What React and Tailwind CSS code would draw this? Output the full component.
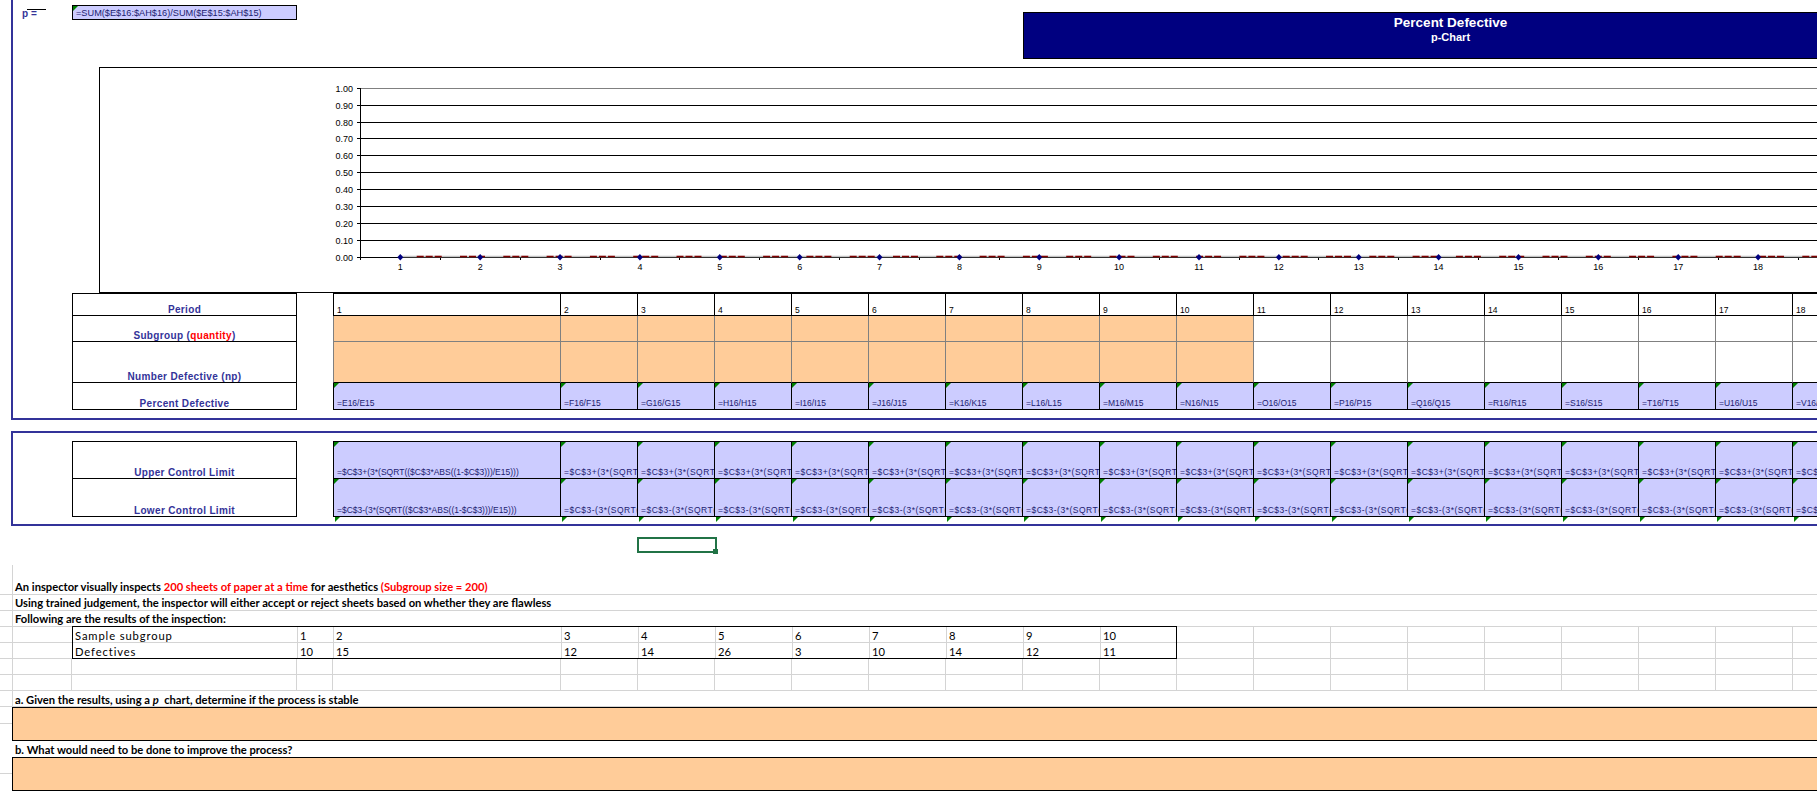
import React from 'react';

const COLS = Array.from({ length: 18 }, (_, i) => i);
const LETTERS = 'EFGHIJKLMNOPQRSTUV'.split('');
const GRID_Y = [20.5, 37.5, 54.5, 70.5, 87.5, 104.5, 121.5, 138.5, 155.5, 172.5, 189.5];
const Y_LABELS = ['1.00', '0.90', '0.80', '0.70', '0.60', '0.50', '0.40', '0.30', '0.20', '0.10', '0.00'];
const SAMPLES = [
  [1, 10],
  [2, 15],
  [3, 12],
  [4, 14],
  [5, 26],
  [6, 3],
  [7, 10],
  [8, 14],
  [9, 12],
  [10, 11],
];

const Flag = ({ className = 'top-0 left-0' }) => (
  <span className={`absolute w-[5px] h-[5px] bg-[#008000] [clip-path:polygon(0_0,100%_0,0_100%)] ${className}`} />
);

const Label = ({ children, className = '' }) => (
  <div className={`flex items-end justify-center border-x border-b border-black bg-white text-[10px] leading-[10px] font-bold tracking-[0.35px] text-[#333399] ${className}`}>
    {children}
  </div>
);

const FormulaCell = ({ text, first, top, wide, bottomFlag }) => (
  <div className={`relative flex items-end min-w-0 border-r border-b border-black bg-[#ccccff] pl-[3px] text-[8.5px] leading-[11px] text-[#1c1c70] whitespace-nowrap ${first ? 'border-l' : ''} ${top ? 'border-t' : ''} ${wide && !first ? 'tracking-[0.5px]' : ''}`}>
    <Flag />
    <span className="block w-full overflow-hidden">{text}</span>
    {bottomFlag && <Flag className="top-full left-[1px] mt-px" />}
  </div>
);

const Chart = () => {
  const centers = COLS.map((i) => 300.3 + i * 79.87);
  return (
    <svg className="block w-full h-full" viewBox="0 0 1717 224" preserveAspectRatio="xMinYMin slice">
      {GRID_Y.map((y, i) => (
        <g key={y} shapeRendering="crispEdges">
          <line x1="260" x2="1717" y1={y} y2={y} stroke={i === 0 ? '#808080' : '#000'} />
          <line x1="257" x2="260" y1={y} y2={y} stroke="#000" />
          <text x="253" y={y + 3.5} textAnchor="end" fontSize="9" fontFamily="Liberation Sans" fill="#000">
            {Y_LABELS[i]}
          </text>
        </g>
      ))}
      <line x1="260.5" x2="260.5" y1="20" y2="190" stroke="#000" shapeRendering="crispEdges" />
      {Array.from({ length: 19 }, (_, i) => (
        <line key={i} x1={260.5 + i * 79.87} x2={260.5 + i * 79.87} y1="189" y2="192" stroke="#000" shapeRendering="crispEdges" />
      ))}
      <line x1="300" x2="1717" y1="188.6" y2="188.6" stroke="#c4c4c4" strokeWidth="1.5" />
      <line x1="316.7" x2="1717" y1="188.6" y2="188.6" stroke="#800000" strokeWidth="1.5" strokeDasharray="7 2 7 2 7 18.3" />
      {centers.map((x, i) => (
        <g key={x}>
          <polygon points={`${x},186 ${x + 3},189.3 ${x},192.6 ${x - 3},189.3`} fill="#000080" />
          <text x={x} y="202" textAnchor="middle" fontSize="9" fontFamily="Liberation Sans" fill="#000">
            {i + 1}
          </text>
        </g>
      ))}
    </svg>
  );
};

const TopPanel = () => (
  <div className="h-[420px] border-l-2 border-b-2 border-[#333399]">
    <div className="flex items-start h-[67px] pt-[5px]">
      <div className="relative w-[59px] shrink-0 pl-[9px] pt-[3px] text-[10px] leading-[12px] font-bold text-[#333399]">
        <span className="absolute left-[14px] top-[4px] w-[19px] h-px bg-black" />
        p<span className="ml-[3px]">=</span>
      </div>
      <div className="relative w-[225px] h-[15px] shrink-0 border border-black bg-[#ccccff] pl-[3px] text-[9.2px] leading-[14px] text-[#1c1c70]">
        <Flag />
        =SUM($E$16:$AH$16)/SUM($E$15:$AH$15)
      </div>
      <div className="ml-[726px] mt-[7px] w-[855px] h-[47px] shrink-0 border border-black bg-[#000080] text-center font-bold text-white">
        <div className="text-[13.5px] leading-[14px] mt-[3px]">Percent Defective</div>
        <div className="text-[11px] leading-[13px] mt-[1px]">p-Chart</div>
      </div>
    </div>

    <div className="ml-[86px] h-[226px] border-t border-l border-b border-black">
      <Chart />
    </div>

    <div className="ml-[59px] grid grid-cols-[225px_36px_228px_repeat(17,77px)] grid-rows-[23px_26px_41px_27px]">
      <Label className="border-t">Period</Label>
      <div />
      {COLS.map((i) => (
        <div key={i} className={`flex items-end border-t border-r border-b border-black pl-[3px] text-[8.5px] leading-[10px] text-black ${i === 0 ? 'border-l' : ''}`}>
          {i + 1}
        </div>
      ))}

      <Label>
        <span>
          Subgroup (<span className="text-[#ff0000]">quantity</span>)
        </span>
      </Label>
      <div />
      {COLS.map((i) => (
        <div key={i} className={`border-r border-b border-[#808080] ${i === 0 ? 'border-l' : ''} ${i < 10 ? 'bg-[#ffcc99]' : ''}`} />
      ))}

      <Label>Number Defective (np)</Label>
      <div />
      {COLS.map((i) => (
        <div key={i} className={`border-r border-b border-r-[#808080] border-b-black ${i === 0 ? 'border-l border-l-[#808080]' : ''} ${i < 10 ? 'bg-[#ffcc99]' : ''}`} />
      ))}

      <Label>Percent Defective</Label>
      <div />
      {COLS.map((i) => (
        <FormulaCell key={i} first={i === 0} text={`=${LETTERS[i]}16/${LETTERS[i]}15`} />
      ))}
    </div>
  </div>
);

const LimitPanel = () => (
  <div className="mt-[11px] h-[95px] border-t-2 border-l-2 border-b-2 border-[#333399] pt-[8px]">
    <div className="ml-[59px] grid grid-cols-[225px_36px_228px_repeat(17,77px)] grid-rows-[38px_38px]">
      <Label className="border-t">Upper Control Limit</Label>
      <div />
      {COLS.map((i) => (
        <FormulaCell key={i} first={i === 0} top wide text={`=$C$3+(3*(SQRT(($C$3*ABS((1-$C$3)))/${LETTERS[i]}15)))`} />
      ))}
      <Label>Lower Control Limit</Label>
      <div />
      {COLS.map((i) => (
        <FormulaCell key={i} first={i === 0} wide bottomFlag text={`=$C$3-(3*(SQRT(($C$3*ABS((1-$C$3)))/${LETTERS[i]}15)))`} />
      ))}
    </div>
  </div>
);

const EmptyCols = ({ count }) =>
  Array.from({ length: count }, (_, i) => <div key={i} className="w-[77px] shrink-0 border-r border-[#d4d4d4]" />);

const SheetLine = ({ children, className = 'h-[16px]' }) => (
  <div className={`flex items-end ml-[12px] border-l border-[#d4d4d4] pl-[2px] whitespace-nowrap ${className}`}>
    <span className="block leading-[15px]">{children}</span>
  </div>
);

const AnswerBox = () => (
  <div className="flex h-[34px]">
    <div className="w-[12px] shrink-0">
      <div className="h-[17px] border-b border-[#d4d4d4]" />
    </div>
    <div className="flex-1 border-y border-l border-black bg-[#ffcc99]" />
  </div>
);

const Sheet = () => (
  <div className="mt-[12px] font-['Lato',sans-serif] text-[11.2px] font-bold text-black">
    <div className="h-[30px] border-b border-[#d4d4d4]">
      <SheetLine className="h-[29px]">
        <span>
          An inspector visually inspects <span className="text-[#ff0000]">200 sheets of paper at a time</span> for aesthetics{' '}
          <span className="text-[#ff0000]">(Subgroup size = 200)</span>
        </span>
      </SheetLine>
    </div>
    <div className="h-[16px] border-b border-[#d4d4d4]">
      <SheetLine className="h-[15px]">Using trained judgement, the inspector will either accept or reject sheets based on whether they are flawless</SheetLine>
    </div>
    <div className="h-[16px] border-b border-[#d4d4d4]">
      <SheetLine className="h-[15px]">Following are the results of the inspection:</SheetLine>
    </div>

    <div className="flex h-[32px] font-normal">
      <div className="w-[72px] shrink-0 flex flex-col">
        <div className="h-[16px] border-b border-[#d4d4d4]">
          <div className="ml-[12px] h-full border-l border-[#d4d4d4]" />
        </div>
        <div className="h-[16px] border-b border-[#d4d4d4]">
          <div className="ml-[12px] h-full border-l border-[#d4d4d4]" />
        </div>
      </div>
      <div className="w-[1105px] shrink-0 -mt-px h-[33px] border border-black">
        <div className="flex h-[16px] border-b border-[#d4d4d4]">
          <div className="w-[225px] shrink-0 border-r border-[#d4d4d4] pl-[2px] pt-px leading-[15px] tracking-[0.9px]">Sample subgroup</div>
          {SAMPLES.map(([n], i) => (
            <div key={n} className={`${i === 0 ? 'w-[36px]' : i === 1 ? 'w-[228px]' : 'w-[77px]'} shrink-0 border-r border-[#d4d4d4] pl-[2px] pt-px leading-[15px] last:border-r-0`}>
              {n}
            </div>
          ))}
        </div>
        <div className="flex h-[15px]">
          <div className="w-[225px] shrink-0 border-r border-[#d4d4d4] pl-[2px] pt-px leading-[15px] tracking-[0.9px]">Defectives</div>
          {SAMPLES.map(([n, d], i) => (
            <div key={n} className={`${i === 0 ? 'w-[36px]' : i === 1 ? 'w-[228px]' : 'w-[77px]'} shrink-0 border-r border-[#d4d4d4] pl-[2px] pt-px leading-[15px] last:border-r-0`}>
              {d}
            </div>
          ))}
        </div>
      </div>
      <div className="flex-1 flex flex-col min-w-0">
        <div className="flex h-[16px] border-b border-[#d4d4d4]">
          <EmptyCols count={9} />
        </div>
        <div className="flex h-[16px] border-b border-[#d4d4d4]">
          <EmptyCols count={9} />
        </div>
      </div>
    </div>

    {[0, 1].map((r) => (
      <div key={r} className="flex h-[16px] border-b border-[#d4d4d4]">
        <div className="ml-[12px] w-[60px] shrink-0 border-l border-r border-[#d4d4d4]" />
        <div className="w-[225px] shrink-0 border-r border-[#d4d4d4]" />
        <div className="w-[36px] shrink-0 border-r border-[#d4d4d4]" />
        <div className="w-[228px] shrink-0 border-r border-[#d4d4d4]" />
        <EmptyCols count={16} />
      </div>
    ))}

    <div className="h-[16px] border-b border-[#d4d4d4]">
      <SheetLine className="h-[15px] pt-px">
        <span className="relative top-px">
          a. Given the results, using a <i>p</i>&nbsp; chart, determine if the process is stable
        </span>
      </SheetLine>
    </div>
    <AnswerBox />
    <div className="h-[16px]">
      <SheetLine className="h-[15px] border-l-0 ml-[13px]">
        <span className="relative top-px">b. What would need to be done to improve the process?</span>
      </SheetLine>
    </div>
    <AnswerBox />
  </div>
);

export default function App() {
  return (
    <div className="w-[1817px] h-[805px] overflow-hidden bg-white font-['Liberation_Sans',Arial,sans-serif]">
      <div className="ml-[11px] w-[1806px]">
        <TopPanel />
        <LimitPanel />
      </div>
      <div className="relative ml-[637px] mt-[11px] w-[80px] h-[16px] border-2 border-[#217346]">
        <span className="absolute -right-[3px] -bottom-[3px] w-[5px] h-[5px] bg-[#217346]" />
      </div>
      <Sheet />
    </div>
  );
}
